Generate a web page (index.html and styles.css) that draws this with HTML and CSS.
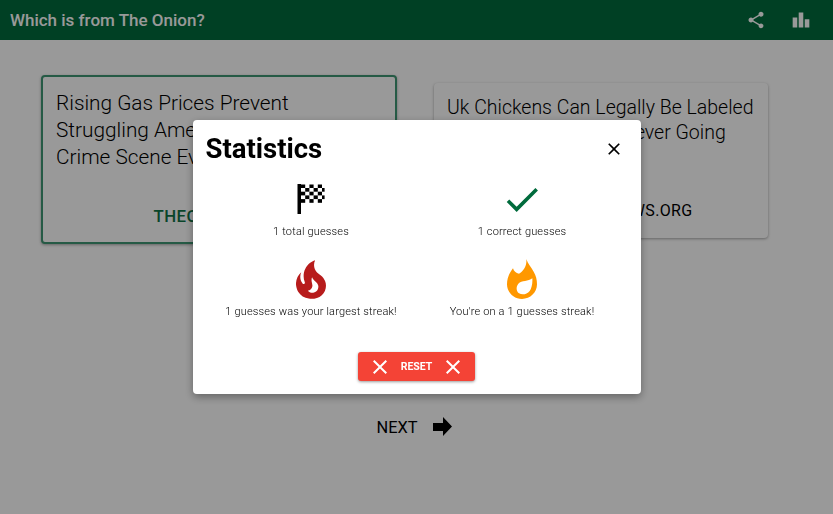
FILE: index.html
```html
<!DOCTYPE html>
<html lang="en">
<head>
<meta charset="utf-8">
<title>Which is from The Onion?</title>
<link rel="stylesheet" href="styles.css">
</head>
<body>
<header class="appbar">
  <h1 class="appbar-title">Which is from The Onion?</h1>
  <div class="appbar-actions">
    <svg class="appbar-icon" viewBox="0 0 24 24"><path d="M18 16.08c-.76 0-1.44.3-1.96.77L8.91 12.7c.05-.23.09-.46.09-.7s-.04-.47-.09-.7l7.05-4.11c.54.5 1.25.81 2.04.81 1.66 0 3-1.34 3-3s-1.34-3-3-3-3 1.34-3 3c0 .24.04.47.09.7L8.04 9.81C7.5 9.31 6.79 9 6 9c-1.66 0-3 1.34-3 3s1.34 3 3 3c.79 0 1.5-.31 2.04-.81l7.12 4.16c-.05.21-.08.43-.08.65 0 1.61 1.31 2.92 2.92 2.92 1.61 0 2.92-1.31 2.92-2.92s-1.31-2.92-2.92-2.92z"/></svg>
    <svg class="appbar-icon" viewBox="0 0 24 24"><path d="M7.5 21H2V9h5.5v12zm7.25-18h-5.5v18h5.5V3zM22 11h-5.5v10H22V11z"/></svg>
  </div>
</header>
<main class="game">
  <div class="cards">
    <article class="card card-selected">
      <p class="headline">Rising Gas Prices Prevent Struggling Americans Fleeing Crime Scene Evidence</p>
      <p class="source">THEONION.COM</p>
    </article>
    <article class="card card-other">
      <p class="headline">Uk Chickens Can Legally Be Labeled Free Range, Despite Never Going Outside</p>
      <p class="source">THEPOULTRYNEWS.ORG</p>
    </article>
  </div>
  <div class="next">
    <span>NEXT</span>
    <svg class="next-icon" viewBox="0 0 20 20"><polygon points="0,6 10,6 10,0 19,9.5 10,19 10,14 0,14"/></svg>
  </div>
</main>
<div class="overlay">
  <section class="dialog">
    <div class="dialog-head">
      <h2 class="dialog-title">Statistics</h2>
      <svg class="close-icon" viewBox="0 0 24 24"><path d="M19 6.41 17.59 5 12 10.59 6.41 5 5 6.41 10.59 12 5 17.59 6.41 19 12 13.41 17.59 19 19 17.59 13.41 12z"/></svg>
    </div>
    <div class="stats">
      <div class="stat">
        <svg class="stat-icon" viewBox="0 0 30 30">
          <rect x="0.5" y="0" width="3.5" height="30"/>
          <rect x="4" y="0.5" width="4.2" height="3.5"/><rect x="12.4" y="0.5" width="4.2" height="3.5"/><rect x="20.8" y="0.5" width="4.2" height="3.5"/>
          <rect x="8.2" y="4" width="4.2" height="3.7"/><rect x="16.6" y="4" width="4.2" height="3.7"/><rect x="25" y="4" width="2.6" height="3.7"/>
          <rect x="4" y="7.7" width="4.2" height="3.7"/><rect x="12.4" y="7.7" width="4.2" height="3.7"/><rect x="20.8" y="7.7" width="4.2" height="3.7"/>
          <rect x="8.2" y="11.4" width="4.2" height="3.7"/><rect x="16.6" y="11.4" width="4.2" height="3.7"/><rect x="25" y="11.4" width="2.6" height="3.7"/>
          <rect x="4" y="15.1" width="4.2" height="3.7"/><rect x="12.4" y="15.1" width="4.2" height="3.7"/><rect x="20.8" y="15.1" width="4.2" height="3.7"/>
        </svg>
        <p class="stat-label">1 total guesses</p>
      </div>
      <div class="stat">
        <svg class="stat-icon stat-check" viewBox="3 5 18.6 14.6"><path d="M9 16.17L4.83 12l-1.42 1.41L9 19 21 7l-1.41-1.41z"/></svg>
        <p class="stat-label">1 correct guesses</p>
      </div>
      <div class="stat">
        <svg class="stat-icon stat-flame-red" viewBox="5 3 14 18"><path fill-rule="evenodd" d="M17.66 11.2C17.43 10.9 17.15 10.64 16.89 10.38C16.22 9.78 15.46 9.35 14.82 8.72C13.33 7.26 13 4.85 13.95 3C13 3.23 12.17 3.75 11.46 4.32C8.87 6.4 7.85 10.07 9.07 13.22C9.11 13.32 9.15 13.42 9.15 13.55C9.15 13.77 9 13.97 8.8 14.05C8.57 14.15 8.33 14.09 8.14 13.93C8.08 13.88 8.04 13.83 8 13.76C6.87 12.33 6.69 10.28 7.45 8.64C5.78 10 4.87 12.3 5 14.47C5.06 14.97 5.12 15.47 5.29 15.97C5.43 16.57 5.7 17.17 6 17.7C7.08 19.43 8.95 20.67 10.96 20.92C13.1 21.19 15.39 20.8 17.03 19.32C18.86 17.66 19.5 15 18.56 12.72L18.43 12.46C18.28 12.13 17.66 11.2 17.66 11.2M14.5 17.5C14.22 17.74 13.76 18 13.4 18.1C12.28 18.5 11.16 17.94 10.5 17.28C11.69 17 12.4 16.12 12.61 15.23C12.78 14.43 12.46 13.77 12.33 13C12.21 12.26 12.23 11.63 12.5 10.94C12.69 11.32 12.89 11.7 13.13 12C13.9 13 15.11 13.44 15.37 14.8C15.41 14.94 15.43 15.08 15.43 15.23C15.46 16.05 15.1 16.95 14.5 17.5Z"/></svg>
        <p class="stat-label">1 guesses was your largest streak!</p>
      </div>
      <div class="stat">
        <svg class="stat-icon stat-flame-orange" viewBox="0 0 90 120"><path fill-rule="evenodd" d="M58 0C62 14 72 24 80 38C87 50 90 62 90 76C90 100 70 120 45 120C20 120 0 100 0 76C0 58 7 42 18 28C20 36 27 43 36 44C50 36 60 20 58 0ZM76 58C64 68 44 64 34 74C26 84 28 98 36 103C46 109 60 106 68 96C74 88 77 72 76 58Z"/></svg>
        <p class="stat-label">You're on a 1 guesses streak!</p>
      </div>
    </div>
    <div class="dialog-actions">
      <button class="reset" type="button">
        <svg class="reset-icon" viewBox="0 0 24 24"><path d="M19 6.41 17.59 5 12 10.59 6.41 5 5 6.41 10.59 12 5 17.59 6.41 19 12 13.41 17.59 19 19 17.59 13.41 12z"/></svg>
        <span>RESET</span>
        <svg class="reset-icon" viewBox="0 0 24 24"><path d="M19 6.41 17.59 5 12 10.59 6.41 5 5 6.41 10.59 12 5 17.59 6.41 19 12 13.41 17.59 19 19 17.59 13.41 12z"/></svg>
      </button>
    </div>
  </section>
</div>
</body>
</html>
```

FILE: styles.css
```css
* { box-sizing: border-box; }
html, body { margin: 0; padding: 0; height: 100%; overflow: hidden; }
body { font-family: Roboto, "Liberation Sans", sans-serif; background: #fff; color: #000; }

.appbar {
  height: 40px;
  background: #006b3c;
  display: flex;
  align-items: center;
  justify-content: space-between;
  padding: 0 22px 0 10px;
  color: #fff;
}
.appbar-title { margin: 0; font-size: 17px; font-weight: 500; }
.appbar-actions { display: flex; gap: 25px; }
.appbar-icon { width: 20px; height: 20px; fill: #fff; display: block; }

.game { padding: 35px 45px 0 41px; }
.cards { display: flex; gap: 37px; align-items: flex-start; }
.card {
  background: #fff;
  border-radius: 4px;
  box-shadow: 0 1px 3px rgba(0,0,0,.35);
  display: flex;
  flex-direction: column;
  justify-content: space-between;
}
.card-selected {
  width: 356px;
  height: 169px;
  border: 2px solid #3f9673;
  padding: 13px 30px 16px 13px;
  color: #0f7347;
}
.card-other {
  width: 334px;
  height: 155px;
  margin-top: 8px;
  padding: 12px 10px 18px 13px;
}
.headline { margin: 0; font-size: 20.8px; font-weight: 300; line-height: 27px; color: #000; }
.card-other .headline { font-size: 19.5px; line-height: 25px; }
.source { margin: 0; font-size: 16.8px; font-weight: 500; text-align: center; letter-spacing: .5px; }
.card-selected .source { margin-right: -17px; }
.card-other .source { font-size: 16px; font-weight: 400; letter-spacing: .35px; margin-right: 3px; }

.next {
  display: flex;
  justify-content: center;
  align-items: center;
  gap: 15px;
  margin-top: 173px;
  font-size: 16.4px;
}
.next-icon { width: 20px; height: 20px; fill: #000; display: block; }

.overlay {
  position: fixed;
  inset: 0;
  background: rgba(0,0,0,.4);
  display: flex;
  align-items: center;
  justify-content: center;
}
.dialog {
  width: 448px;
  height: 274px;
  background: #fff;
  border-radius: 4px;
  box-shadow: 0 3px 8px rgba(0,0,0,.35);
  padding: 12px 13px 13px;
  display: flex;
  flex-direction: column;
}
.dialog-head { display: flex; justify-content: space-between; align-items: center; padding-right: 4px; }
.dialog-title { margin: 0; font-size: 27.5px; font-weight: 700; line-height: 33px; }
.close-icon { width: 20px; height: 20px; display: block; }

.stats {
  display: grid;
  grid-template-columns: 211px 211px;
  grid-template-rows: 80px 70px;
  justify-content: start;
  margin-top: 15px;
}
.stat { display: flex; flex-direction: column; align-items: center; }
.stat-label { margin: 0; font-size: 11px; font-weight: 300; line-height: 13px; color: #000; letter-spacing: .17px; }
.stat-icon { display: block; width: 30px; height: 30px; margin-top: 4px; margin-bottom: 11px; margin-left: 2px; }
.stat-check { width: 33px; height: 26px; margin: 7px 0 12px; fill: #006b3c; }
.stat-flame-red { width: 30px; height: 39px; margin: 0 0 6px; fill: #b71c1c; }
.stat-flame-orange { width: 30px; height: 40px; margin: -1px 0 6px; fill: #ff9800; }

.dialog-actions { margin-top: auto; display: flex; justify-content: center; }
.reset {
  width: 117px;
  height: 29px;
  padding: 0;
  border: 0;
  border-radius: 3px;
  background: #f44336;
  color: #fff;
  font-family: inherit;
  font-size: 10.5px;
  font-weight: 700;
  box-shadow: 0 1px 3px rgba(0,0,0,.4);
  display: flex;
  align-items: center;
  justify-content: center;
  gap: 8.5px;
}
.reset-icon { width: 24px; height: 24px; fill: #fff; display: block; }
```
